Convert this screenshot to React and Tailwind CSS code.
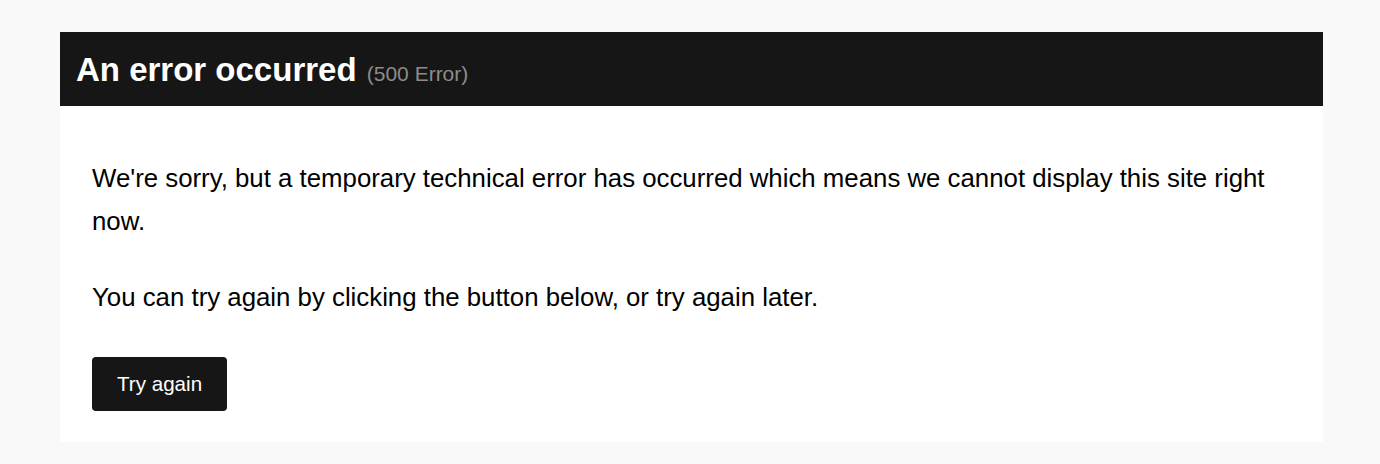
import React from 'react';

export default function App() {
  return (
    <div
      className="min-h-[464px] bg-[#f9f9f9] pt-[32px] pb-[22px]"
      style={{ fontFamily: '"Liberation Sans", Arial, Helvetica, sans-serif' }}
    >
      <div className="ml-[60px] w-[1263px]">
        <div className="h-[74px] bg-[#161616] px-4 pt-[18px]">
          <h1 className="text-[33px] leading-[40px] font-bold text-white">
            An error occurred{' '}
            <span className="ml-[1px] text-[21px] leading-none font-normal text-[#8c8c8c]">(500 Error)</span>
          </h1>
        </div>
        <div className="bg-white px-8 pt-[51px] pb-[31px] text-[25.8px] leading-[43px] text-black">
          <p className="mb-[33px]">
            We're sorry, but a temporary technical error has occurred which means we cannot display
            this site right now.
          </p>
          <p>You can try again by clicking the button below, or try again later.</p>
          <button className="mt-[38px] h-[54px] rounded-[4px] bg-[#161616] px-[25px] text-[20.6px] leading-none text-white">
            Try again
          </button>
        </div>
      </div>
    </div>
  );
}
